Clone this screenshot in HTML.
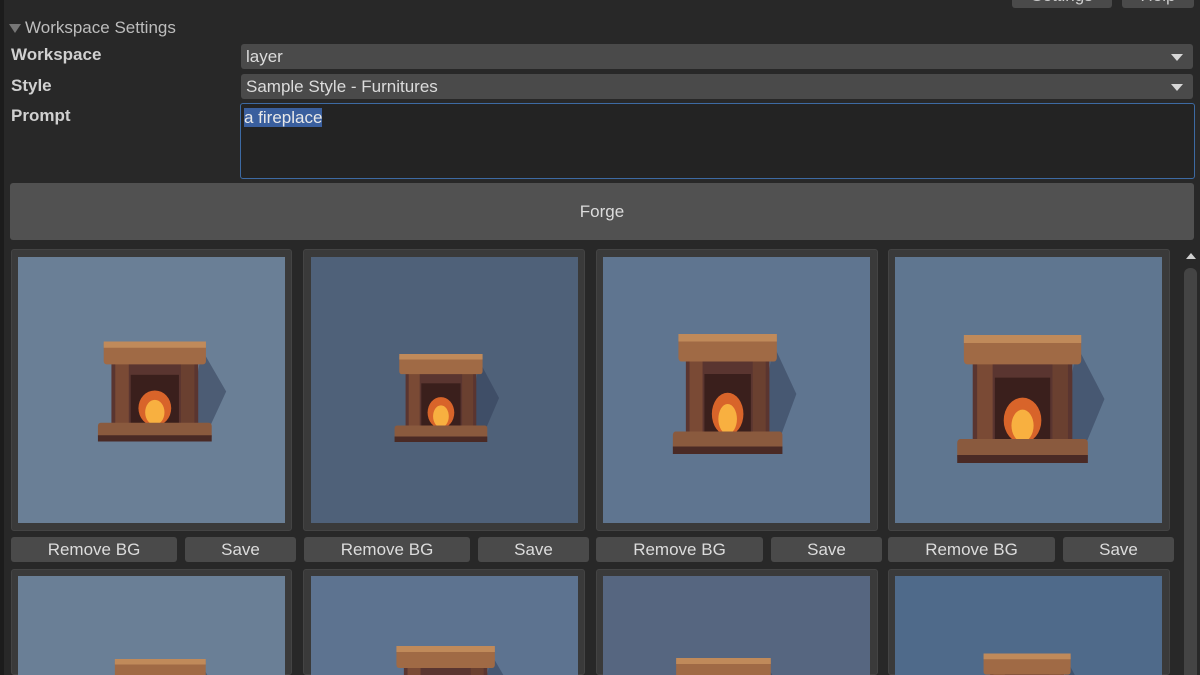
<!DOCTYPE html>
<html style="overflow:hidden"><head><meta charset="utf-8"><style>
*{margin:0;padding:0;box-sizing:border-box}
html,body{width:1200px;height:675px;overflow:hidden}
body{background:#282828;font-family:"Liberation Sans",sans-serif;color:#d2d2d2;position:relative}
.a{position:absolute}
.lbl{font-size:17px;font-weight:bold;color:#d0d0d0}
.dd{background:#4a4a4a;border-radius:3px;font-size:17px;color:#dcdcdc;padding:3px 0 0 5px}
.dd:after{content:"";position:absolute;right:10px;top:10px;border-left:6px solid transparent;border-right:6px solid transparent;border-top:7px solid #d8d8d8}
.card{background:#3a3a3a;border:1px solid #444;border-radius:3px}
.btn{background:#4a4a4a;border-radius:3px;font-size:17px;color:#dcdcdc;text-align:center;line-height:25px}
.img{overflow:hidden}
</style></head><body>
<svg width="0" height="0" style="position:absolute"><defs>
<symbol id="fp" viewBox="0 0 140 120" preserveAspectRatio="none">
<path d="M110 20 L135 60 L115 100 L95 95Z" fill="#33405a" opacity=".55"/>
<rect x="16" y="30" width="90" height="64" fill="#5a3530"/>
<rect x="20" y="32" width="14" height="62" fill="#7a4a35"/>
<rect x="88" y="32" width="14" height="62" fill="#6a4030"/>
<rect x="36" y="44" width="50" height="50" fill="#3a1f1c"/>
<ellipse cx="61" cy="76" rx="17" ry="17" fill="#d8642a"/>
<ellipse cx="61" cy="80" rx="10" ry="12" fill="#f8b040"/>
<rect x="8" y="12" width="106" height="22" rx="3" fill="#a06a45"/>
<rect x="8" y="12" width="106" height="6" fill="#c08a5a"/>
<rect x="2" y="90" width="118" height="16" rx="3" fill="#8a5a3e"/>
<rect x="2" y="102" width="118" height="6" fill="#4a2a25"/>
</symbol></defs></svg>

<div class="a" style="left:0;top:0;width:4px;height:675px;background:#1c1c1c"></div>
<div class="a btn" style="left:1012px;top:-17px;width:100px;height:25px;color:#ccc">Settings</div>
<div class="a btn" style="left:1122px;top:-17px;width:72px;height:25px;color:#ccc">Help</div>

<div class="a" style="left:9px;top:18px;font-size:17px;color:#bdbdbd"><span style="display:inline-block;border-left:6px solid transparent;border-right:6px solid transparent;border-top:9px solid #777;margin-right:4px"></span>Workspace Settings</div>
<div class="a lbl" style="left:11px;top:45px">Workspace</div>
<div class="a lbl" style="left:11px;top:76px">Style</div>
<div class="a lbl" style="left:11px;top:106px">Prompt</div>
<div class="a dd" style="left:241px;top:44px;width:952px;height:25px">layer</div>
<div class="a dd" style="left:241px;top:74px;width:952px;height:25px">Sample Style - Furnitures</div>
<div class="a" style="left:240px;top:103px;width:955px;height:76px;background:#232323;border:1px solid #3d6aa3;border-radius:3px;padding:4px 3px;font-size:17px"><span style="background:#3a5f9e;color:#e8e8e8">a fireplace</span></div>
<div class="a" style="left:10px;top:183px;width:1184px;height:57px;background:#515151;border-radius:3px;font-size:17px;text-align:center;line-height:57px;color:#dcdcdc">Forge</div>

<div class="a card" style="left:11px;top:249px;width:281px;height:282px"></div>
<div class="a img" style="left:18px;top:257px;width:267px;height:266px;background:#6a7f96"><svg class="a" style="left:78px;top:72px" width="135" height="125"><use href="#fp"/></svg></div>
<div class="a card" style="left:303px;top:249px;width:282px;height:282px"></div>
<div class="a img" style="left:311px;top:257px;width:267px;height:266px;background:#4f6179"><svg class="a" style="left:82px;top:86px" width="110" height="110"><use href="#fp"/></svg></div>
<div class="a card" style="left:596px;top:249px;width:282px;height:282px"></div>
<div class="a img" style="left:603px;top:257px;width:267px;height:266px;background:#5f7590"><svg class="a" style="left:68px;top:62px" width="130" height="150"><use href="#fp"/></svg></div>
<div class="a card" style="left:888px;top:249px;width:282px;height:282px"></div>
<div class="a img" style="left:895px;top:257px;width:267px;height:266px;background:#5f7690"><svg class="a" style="left:60px;top:62px" width="155" height="160"><use href="#fp"/></svg></div>

<div class="a btn" style="left:11px;top:537px;width:166px;height:25px">Remove BG</div>
<div class="a btn" style="left:185px;top:537px;width:111px;height:25px">Save</div>
<div class="a btn" style="left:304px;top:537px;width:166px;height:25px">Remove BG</div>
<div class="a btn" style="left:478px;top:537px;width:111px;height:25px">Save</div>
<div class="a btn" style="left:596px;top:537px;width:167px;height:25px">Remove BG</div>
<div class="a btn" style="left:771px;top:537px;width:111px;height:25px">Save</div>
<div class="a btn" style="left:888px;top:537px;width:167px;height:25px">Remove BG</div>
<div class="a btn" style="left:1063px;top:537px;width:111px;height:25px">Save</div>

<div class="a card" style="left:11px;top:569px;width:281px;height:106px"></div>
<div class="a img" style="left:18px;top:576px;width:267px;height:99px;background:#6a7f96"><svg class="a" style="left:90px;top:72px" width="120" height="110"><use href="#fp"/></svg></div>
<div class="a card" style="left:303px;top:569px;width:282px;height:106px"></div>
<div class="a img" style="left:311px;top:576px;width:267px;height:99px;background:#5d7390"><svg class="a" style="left:78px;top:58px" width="130" height="120"><use href="#fp"/></svg></div>
<div class="a card" style="left:596px;top:569px;width:282px;height:106px"></div>
<div class="a img" style="left:603px;top:576px;width:267px;height:99px;background:#566680"><svg class="a" style="left:66px;top:70px" width="125" height="120"><use href="#fp"/></svg></div>
<div class="a card" style="left:888px;top:569px;width:282px;height:106px"></div>
<div class="a img" style="left:895px;top:576px;width:267px;height:99px;background:#4f6a8a"><svg class="a" style="left:82px;top:66px" width="115" height="115"><use href="#fp"/></svg></div>

<div class="a" style="left:1186px;top:253px;border-left:5px solid transparent;border-right:5px solid transparent;border-bottom:6px solid #d0d0d0"></div>
<div class="a" style="left:1184px;top:268px;width:13px;height:407px;background:#444;border-radius:6px 6px 0 0"></div>
</body></html>
